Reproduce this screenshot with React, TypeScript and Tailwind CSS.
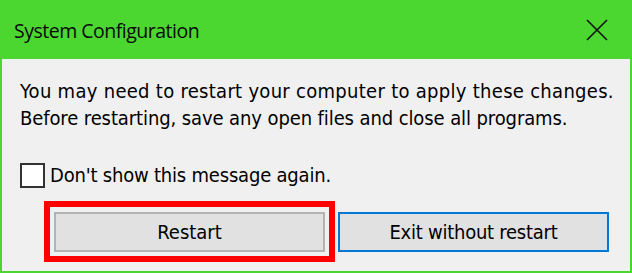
import React from "react";

export default function App() {
  const tahoma = { fontFamily: 'Tahoma, "DejaVu Sans Condensed", "DejaVu Sans", sans-serif' };
  return (
    <div className="w-[632px] h-[273px] bg-[#4bd730] flex flex-col overflow-hidden">
      <div className="h-[59px] flex items-center justify-between pl-[14px] pr-[24px] shrink-0">
        <span
          className="text-[19.5px] tracking-[-0.5px] text-[#0a0a0a] leading-none mt-[2px]"
          style={{ fontFamily: '"Segoe UI", "Open Sans", sans-serif' }}
        >
          System Configuration
        </span>
        <svg width="22" height="22" viewBox="0 0 22 22" className="block">
          <path d="M1 1 L21 21 M21 1 L1 21" stroke="#111" strokeWidth="1.6" />
        </svg>
      </div>
      <div className="flex-1 mx-[2px] mb-[2px] bg-[#f0f0f0] flex flex-col pl-[18px] pt-[19px]" style={tahoma}>
        <div className="text-[20px] leading-[27px] text-[#000] whitespace-nowrap">
          <div className="tracking-[0.29px]">You may need to restart your computer to apply these changes.</div>
          <div className="tracking-[-0.1px]">Before restarting, save any open files and close all programs.</div>
        </div>
        <label className="flex items-center gap-[5px] mt-[31px]">
          <span className="w-[25px] h-[25px] border-2 border-[#333] bg-white block shrink-0" />
          <span className="text-[20px] tracking-[-0.2px] leading-[25px] text-[#000] whitespace-nowrap">Don't show this message again.</span>
        </label>
        <div className="flex gap-[13px] mt-[24px] ml-[34px]">
          <div className="relative">
            <button className="w-[271px] h-[40px] border-2 border-[#b3b3b3] bg-[#e1e1e1] text-[20px] text-[#000]" style={tahoma}>
              Restart
            </button>
            <div className="absolute top-[-11px] left-[-10px] right-[-10px] bottom-[-10px] border-[6px] border-[#ff0000] pointer-events-none" />
          </div>
          <button className="w-[271px] h-[40px] border-2 border-[#0078d7] bg-[#e1e1e1] text-[20px] tracking-[-0.25px] text-[#000]" style={tahoma}>
            Exit without restart
          </button>
        </div>
      </div>
    </div>
  );
}
